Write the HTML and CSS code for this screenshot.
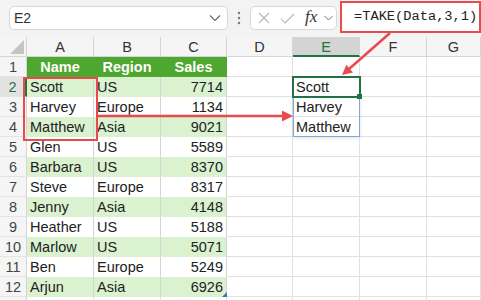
FILE: index.html
```html
<!DOCTYPE html>
<html lang="en">
<head>
    <meta charset="UTF-8">
    <title>TAKE function</title>
    <link rel="stylesheet" href="styles.css">
</head>
<body>
    <div class="screen">
        <div class="toolbar">
            <div class="name-box">
                <span>E2</span>
                <svg width="12" height="8" viewBox="0 0 12 8"><path d="M1 1.5 L6 6.5 L11 1.5" fill="none" stroke="#666" stroke-width="1.1"/></svg>
            </div>
            <div class="dots">
                <svg width="4" height="14" viewBox="0 0 4 14"><circle cx="2" cy="2" r="1.2" fill="#777"/><circle cx="2" cy="7" r="1.2" fill="#777"/><circle cx="2" cy="12" r="1.2" fill="#777"/></svg>
            </div>
            <div class="fx-box">
                <svg class="fx-icon" width="12" height="12" viewBox="0 0 12 12"><path d="M1 1 L11 11 M11 1 L1 11" stroke="#b5b5b5" stroke-width="1.1" fill="none"/></svg>
                <svg class="fx-icon" width="15" height="11" viewBox="0 0 15 11"><path d="M1 5.5 L5 10 L14 1" stroke="#b5b5b5" stroke-width="1.1" fill="none"/></svg>
                <span class="fx">fx</span>
                <svg width="9" height="6" viewBox="0 0 9 6"><path d="M0.5 1 L4.5 5 L8.5 1" fill="none" stroke="#777" stroke-width="1"/></svg>
            </div>
            <div class="formula">=TAKE(Data,3,1)</div>
        </div>

        <div class="sheet">
            <div class="row head">
                <div class="corner">
                    <svg width="26" height="19" viewBox="0 0 26 19"><polygon points="24,3 24,17 10,17" fill="#c4c4c4"/></svg>
                </div>
                <div>A</div><div>B</div><div>C</div><div>D</div><div class="sel">E</div><div>F</div><div>G</div>
            </div>
            <div class="row">
                <div class="rh">1</div>
                <div class="t th">Name</div><div class="t th">Region</div><div class="t th">Sales</div>
                <div></div><div></div><div></div><div></div>
            </div>
            <div class="row band">
                <div class="rh sel">2</div>
                <div class="t">Scott</div><div class="t">US</div><div class="t num">7714</div>
                <div></div><div>Scott</div><div></div><div></div>
            </div>
            <div class="row">
                <div class="rh">3</div>
                <div class="t">Harvey</div><div class="t">Europe</div><div class="t num">1134</div>
                <div></div><div>Harvey</div><div></div><div></div>
            </div>
            <div class="row band">
                <div class="rh">4</div>
                <div class="t">Matthew</div><div class="t">Asia</div><div class="t num">9021</div>
                <div></div><div>Matthew</div><div></div><div></div>
            </div>
            <div class="row">
                <div class="rh">5</div>
                <div class="t">Glen</div><div class="t">US</div><div class="t num">5589</div>
                <div></div><div></div><div></div><div></div>
            </div>
            <div class="row band">
                <div class="rh">6</div>
                <div class="t">Barbara</div><div class="t">US</div><div class="t num">8370</div>
                <div></div><div></div><div></div><div></div>
            </div>
            <div class="row">
                <div class="rh">7</div>
                <div class="t">Steve</div><div class="t">Europe</div><div class="t num">8317</div>
                <div></div><div></div><div></div><div></div>
            </div>
            <div class="row band">
                <div class="rh">8</div>
                <div class="t">Jenny</div><div class="t">Asia</div><div class="t num">4148</div>
                <div></div><div></div><div></div><div></div>
            </div>
            <div class="row">
                <div class="rh">9</div>
                <div class="t">Heather</div><div class="t">US</div><div class="t num">5188</div>
                <div></div><div></div><div></div><div></div>
            </div>
            <div class="row band">
                <div class="rh">10</div>
                <div class="t">Marlow</div><div class="t">US</div><div class="t num">5071</div>
                <div></div><div></div><div></div><div></div>
            </div>
            <div class="row">
                <div class="rh">11</div>
                <div class="t">Ben</div><div class="t">Europe</div><div class="t num">5249</div>
                <div></div><div></div><div></div><div></div>
            </div>
            <div class="row band">
                <div class="rh">12</div>
                <div class="t">Arjun</div><div class="t">Asia</div><div class="t num">6926</div>
                <div></div><div></div><div></div><div></div>
            </div>
            <div class="row">
                <div class="rh"></div>
                <div></div><div></div><div></div><div></div><div></div><div></div><div></div>
            </div>

            <!-- selection and spill range -->
            <div class="spill"></div>
            <div class="active-cell"></div>
            <div class="fill-handle"></div>
        </div>

        <!-- annotations drawn over the sheet -->
        <svg class="marks" width="481" height="300" viewBox="0 0 481 300">
            <polygon points="227,292 227,297 222,297" fill="#3a73b8"/>
            <rect x="24" y="78" width="73" height="62" fill="none" stroke="#ea4a4c" stroke-width="2"/>
            <line x1="390" y1="33" x2="349" y2="69" stroke="#ea4a4c" stroke-width="2.5"/>
            <polygon points="342,75 353,72.4 346.4,64.8" fill="#ea4a4c"/>
            <line x1="97" y1="116" x2="283" y2="116" stroke="#ea4a4c" stroke-width="2.5"/>
            <polygon points="293,116 282,110.5 282,121.5" fill="#ea4a4c"/>
        </svg>
    </div>
</body>
</html>
```

FILE: styles.css
```css
body {
    margin: 0;
    background: #fff;
    font-family: "Liberation Sans", Arial, sans-serif;
    color: #222;
    overflow: hidden;
}
.screen {
    position: relative;
    width: 481px;
    height: 300px;
    overflow: hidden;
}
.toolbar {
    display: flex;
    align-items: flex-start;
    height: 37px;
    padding-left: 9px;
    background: #f3f3f3;
    box-sizing: border-box;
}
.name-box {
    display: flex;
    align-items: center;
    justify-content: space-between;
    width: 219px;
    height: 24px;
    margin-top: 6px;
    padding: 0 6px 0 4px;
    background: #fff;
    border: 1px solid #d9d9d9;
    border-radius: 5px;
    box-sizing: border-box;
    font-size: 14px;
    color: #333;
}
.dots {
    width: 22px;
    display: flex;
    justify-content: center;
    margin-top: 11px;
}
.fx-box {
    display: flex;
    align-items: center;
    width: 87px;
    height: 24px;
    margin-top: 6px;
    padding-left: 7px;
    background: #fff;
    border: 1px solid #d9d9d9;
    border-radius: 5px;
    box-sizing: border-box;
}
.fx-icon {
    margin-right: 10px;
}
.fx {
    font-family: "Liberation Serif", "Times New Roman", serif;
    font-style: italic;
    font-size: 17px;
    color: #333;
    margin-right: 7px;
    margin-top: -2px;
}
.formula {
    width: 141px;
    height: 32px;
    margin-top: 1px;
    margin-left: 3px;
    padding-left: 12px;
    border: 2px solid #ea4a4c;
    background: #fff;
    box-sizing: border-box;
    font-family: "Liberation Mono", "Courier New", monospace;
    font-size: 13.7px;
    line-height: 28px;
    color: #222;
    white-space: nowrap;
}
.sheet {
    position: relative;
}
.row {
    display: grid;
    grid-template-columns: 27px 67px 67px 66px 66px 67px 67px 54px;
    height: 20px;
}
.row > div {
    box-sizing: border-box;
    border-right: 1px solid #e1e1e1;
    border-bottom: 1px solid #e1e1e1;
    padding: 1px 3px 0;
    font-size: 14.5px;
    line-height: 18px;
    white-space: nowrap;
    overflow: hidden;
}
.head > div {
    background: #f5f5f5;
    text-align: center;
    color: #333;
    border-right-color: #d6d6d6;
    border-bottom-color: #d6d6d6;
}
.head > .corner {
    padding: 0;
}
.head > .sel {
    background: #d4d4d4;
    color: #217346;
    border-bottom: 2px solid #217346;
}
.row > .rh {
    background: #f5f5f5;
    text-align: center;
    color: #444;
    padding: 1px 0 0;
    border-right-color: #d6d6d6;
    border-bottom-color: #e4e4e4;
}
.row > .rh.sel {
    background: #e2e2e2;
    color: #2f6e45;
    border-right: 2px solid #217346;
}
.row > .t {
    border-right-color: #d4d4d4;
    border-bottom-color: #fff;
}
.band > .t {
    background: #daf2d0;
    border-bottom-color: #daf2d0;
}
.row > .th {
    background: #4ea72e;
    color: #fff;
    font-weight: bold;
    text-align: center;
    border-right-color: #4ea72e;
    border-bottom-color: #4ea72e;
}
.row > .num {
    text-align: right;
}
.active-cell {
    position: absolute;
    left: 292px;
    top: 39px;
    width: 69px;
    height: 22px;
    border: 2px solid #217346;
    box-sizing: border-box;
}
.spill {
    position: absolute;
    left: 293px;
    top: 60px;
    width: 67px;
    height: 40px;
    border: 1px solid #7da8d8;
    border-top: none;
    box-sizing: border-box;
    box-shadow: 0 1px 4px rgba(0, 0, 0, 0.12);
}
.fill-handle {
    position: absolute;
    left: 357px;
    top: 57px;
    width: 5px;
    height: 5px;
    background: #217346;
}
.marks {
    position: absolute;
    left: 0;
    top: 0;
    pointer-events: none;
}
```
